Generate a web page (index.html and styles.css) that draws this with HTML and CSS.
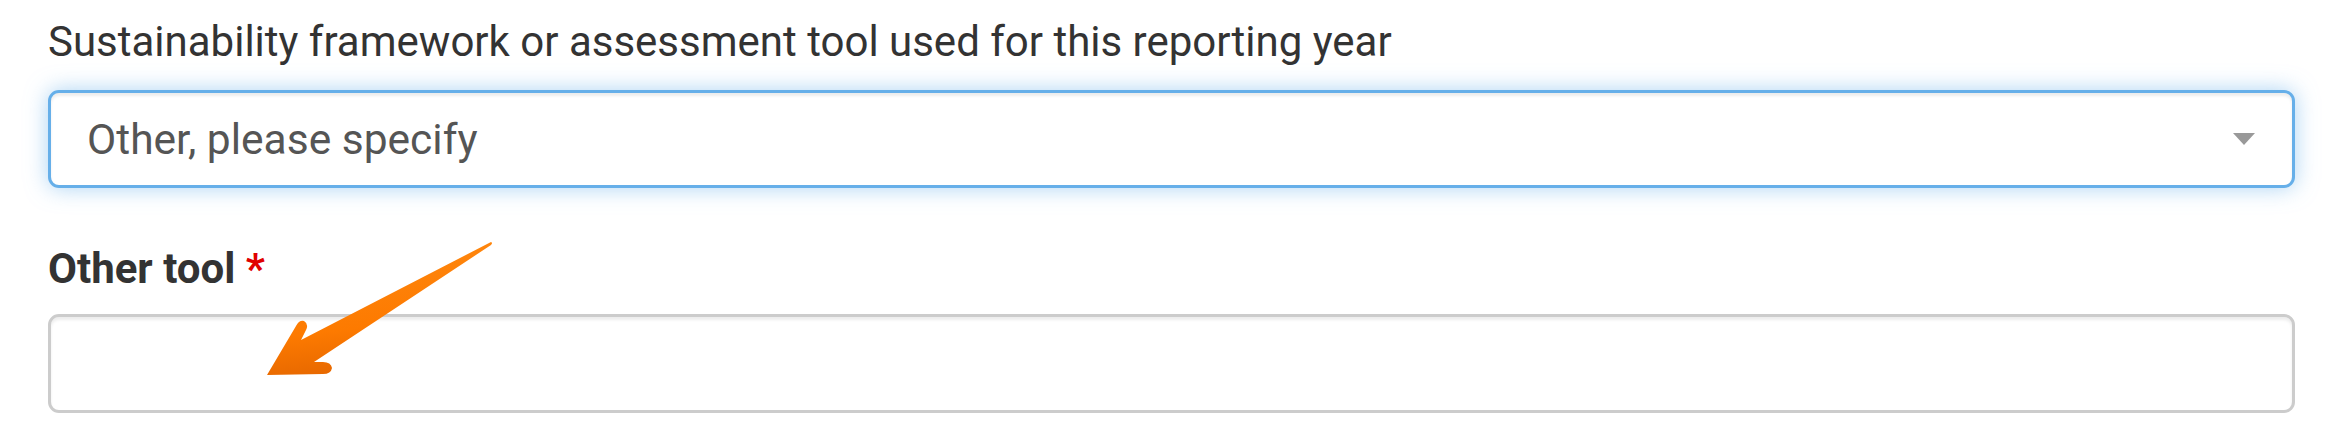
FILE: index.html
```html
<!DOCTYPE html>
<html lang="en">
<head>
<meta charset="utf-8">
<title>Form</title>
<link rel="stylesheet" href="styles.css">
</head>
<body>
<div class="form">
  <div class="group">
    <label class="label">Sustainability framework or assessment tool used for this reporting year</label>
    <div class="select">
      <span class="select-value">Other, please specify</span>
      <span class="caret"></span>
    </div>
  </div>
  <div class="group group-second">
    <label class="label label-bold">Other tool <span class="req">*</span></label>
    <div class="input"></div>
  </div>
</div>
<svg class="pointer" width="2344" height="444" viewBox="0 0 2344 444" aria-hidden="true">
  <defs>
    <linearGradient id="og" x1="0" y1="0" x2="0.2" y2="1">
      <stop offset="0" stop-color="#ff8a12"/>
      <stop offset="0.7" stop-color="#fd7a00"/>
      <stop offset="1" stop-color="#e86900"/>
    </linearGradient>
  </defs>
  <path fill="url(#og)" d="M491 242 Q493 243 491 245 L314 362 L323 362 Q331 362 332 368 Q331 374 323 374 L267 375 L296 326 Q299 320 304 321 Q309 324 306 330 L301 340 Z"/>
</svg>
</body>
</html>
```

FILE: styles.css
```css
html, body {
  margin: 0;
  padding: 0;
  background: #ffffff;
}

body {
  font-family: Roboto, "Liberation Sans", Arial, sans-serif;
  color: #333333;
  width: 2344px;
  height: 444px;
  overflow: hidden;
  position: relative;
}

.form {
  display: flex;
  flex-direction: column;
  padding: 18px 49px 0 48px;
}

.group {
  display: flex;
  flex-direction: column;
}

.group-second {
  margin-top: 57px;
}

.label {
  display: block;
  font-size: 42px;
  line-height: 48px;
  font-weight: 400;
  color: #333333;
  white-space: nowrap;
}

.label-bold {
  font-weight: 700;
}

.req {
  color: #e00000;
}

.select {
  margin-top: 24px;
  height: 98px;
  box-sizing: border-box;
  border: 3px solid #66afe9;
  border-radius: 11px;
  background: #ffffff;
  box-shadow: inset 0 3px 3px rgba(0, 0, 0, 0.075), 0 0 22px rgba(102, 175, 233, 0.55);
  display: flex;
  align-items: center;
  justify-content: space-between;
  padding: 0 37px 0 36px;
}

.select-value {
  font-size: 42.5px;
  color: #555555;
}

.caret {
  width: 0;
  height: 0;
  border-left: 11px solid transparent;
  border-right: 11px solid transparent;
  border-top: 12px solid #999999;
}

.input {
  margin-top: 21px;
  height: 99px;
  box-sizing: border-box;
  border: 3px solid #cccccc;
  border-radius: 11px;
  background: #ffffff;
  box-shadow: inset 0 3px 3px rgba(0, 0, 0, 0.075);
}

.pointer {
  position: absolute;
  left: 0;
  top: 0;
  pointer-events: none;
}
```
